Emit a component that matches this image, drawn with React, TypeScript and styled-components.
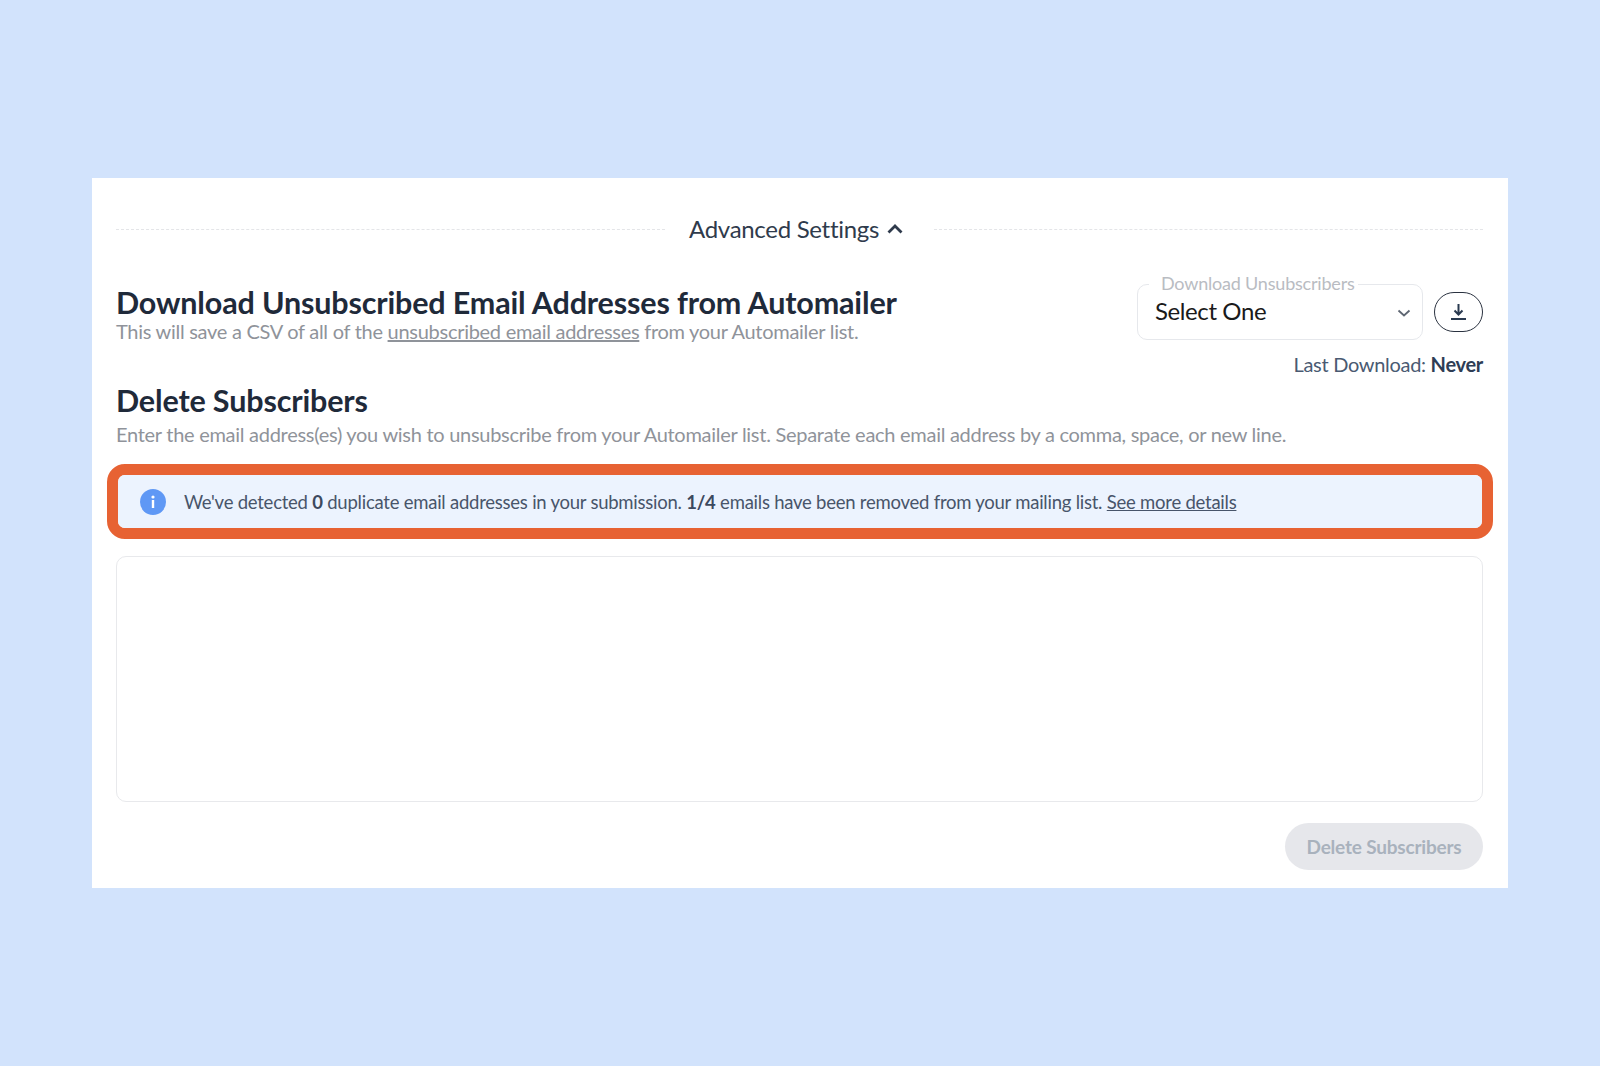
import React from "react";
import styled, { createGlobalStyle } from "styled-components";

const Global = createGlobalStyle`
  html, body { margin: 0; padding: 0; }
  body { background: #d2e3fc; font-family: Lato, "Open Sans", sans-serif; }
`;

const Page = styled.div`
  box-sizing: border-box;
  height: 1066px;
  padding: 178px 92px 0;
`;

const Card = styled.main`
  box-sizing: border-box;
  width: 1416px;
  height: 710px;
  background: #fff;
  padding: 39px 25px 18px 24px;
`;

const DividerRow = styled.div`
  display: flex;
  align-items: center;
  height: 24px;
  gap: 24px;
`;

const DashLine = styled.div`
  flex: 1;
  border-top: 1px dashed #e4e5e8;
`;

const Toggle = styled.div`
  display: flex;
  align-items: center;
  gap: 8px;
  padding: 0 7px 2px 0;
  font-size: 24px;
  letter-spacing: -0.3px;
  color: #2f3b4c;
`;

const ToggleChevron = styled.svg`
  margin-top: 2px;
`;

const DownloadRow = styled.section`
  display: flex;
  justify-content: space-between;
  margin-top: 43px;
`;

const Heading = styled.h2`
  margin: 1px 0 -1px;
  font-size: 30.5px;
  line-height: 35px;
  font-weight: 700;
  letter-spacing: -0.15px;
  color: #1f2a3a;
`;

const Muted = styled.p`
  margin: 0;
  font-size: 20px;
  line-height: 24px;
  letter-spacing: -0.28px;
  color: #8f939a;
  a { color: inherit; text-decoration: underline; }
`;

const Controls = styled.div`
  display: flex;
  flex-direction: column;
  align-items: flex-end;
`;

const ControlRow = styled.div`
  display: flex;
  align-items: center;
  gap: 11px;
`;

const SelectBox = styled.div`
  position: relative;
  box-sizing: border-box;
  width: 286px;
  height: 56px;
  border: 1.5px solid #e6e8ec;
  border-radius: 10px;
  padding: 0 11px 4px 17px;
  display: flex;
  align-items: center;
  justify-content: space-between;
  font-size: 24px;
  letter-spacing: -0.4px;
  color: #1a1a1a;
`;

const SelectChevron = styled.svg`
  margin-top: 6px;
`;

const FloatLabel = styled.span`
  position: absolute;
  left: 11px;
  top: -12px;
  padding: 0 3px 0 12px;
  background: #fff;
  font-size: 18px;
  line-height: 20px;
  letter-spacing: -0.2px;
  color: #b9bcc2;
`;

const RoundButton = styled.button`
  width: 49px;
  height: 40px;
  padding: 0;
  display: flex;
  align-items: center;
  justify-content: center;
  background: #fff;
  border: 1.5px solid #2a3240;
  border-radius: 20px;
  color: #2a3a50;
`;

const LastDownload = styled.div`
  margin-top: 13px;
  font-size: 20px;
  line-height: 22px;
  letter-spacing: -0.3px;
  color: #4a5a72;
  strong { color: #2e3d55; font-weight: 700; }
`;

const DeleteHeading = styled(Heading)`
  margin-top: 8px;
`;

const DeleteText = styled(Muted)`
  margin-top: 5px;
`;

const Highlight = styled.div`
  margin: 18px -10px 0 -9px;
  border: 11px solid #e76233;
  border-radius: 18px;
  overflow: hidden;
`;

const Alert = styled.div`
  display: flex;
  align-items: center;
  height: 53px;
  padding-left: 22px;
  gap: 18px;
  background: #ecf3fe;
  font-size: 18.5px;
  letter-spacing: -0.24px;
  color: #48556a;
  strong { font-weight: 700; color: #3c495e; }
  a { color: inherit; text-decoration: underline; }
`;

const Area = styled.div`
  box-sizing: border-box;
  margin-top: 17px;
  height: 246px;
  border: 1.5px solid #e8e9ec;
  border-radius: 10px;
`;

const Footer = styled.div`
  display: flex;
  justify-content: flex-end;
  margin-top: 21px;
`;

const DeleteButton = styled.button`
  width: 198px;
  height: 47px;
  border: 0;
  border-radius: 24px;
  background: #e6e7eb;
  color: #a9b2bd;
  font-family: inherit;
  font-size: 19px;
  font-weight: 700;
  letter-spacing: -0.2px;
`;

export default function App() {
  return (
    <>
      <Global />
      <Page>
        <Card>
          <DividerRow>
            <DashLine />
            <Toggle>
              Advanced Settings
              <ToggleChevron width="16" height="10" viewBox="0 0 16 10" fill="none">
                <path d="M1.5 8.5 8 2l6.5 6.5" stroke="#2f3b4c" strokeWidth="2.8" />
              </ToggleChevron>
            </Toggle>
            <DashLine />
          </DividerRow>
          <DownloadRow>
            <div>
              <Heading>Download Unsubscribed Email Addresses from Automailer</Heading>
              <Muted>
                This will save a CSV of all of the <a>unsubscribed email addresses</a> from your Automailer list.
              </Muted>
            </div>
            <Controls>
              <ControlRow>
                <SelectBox>
                  <FloatLabel>Download Unsubscribers</FloatLabel>
                  Select One
                  <SelectChevron width="14" height="8" viewBox="0 0 14 8" fill="none">
                    <path d="M1.5 1.5 7 6.5l5.500-5" stroke="#5e6672" strokeWidth="1.8" />
                  </SelectChevron>
                </SelectBox>
                <RoundButton aria-label="Download">
                  <svg width="20" height="20" viewBox="0 0 20 20" fill="none">
                    <path d="M9.500 2v10M5.500 8.500l4 4 4-4M2 17h15" stroke="#2a3a50" strokeWidth="2" />
                  </svg>
                </RoundButton>
              </ControlRow>
              <LastDownload>
                Last Download: <strong>Never</strong>
              </LastDownload>
            </Controls>
          </DownloadRow>
          <DeleteHeading>Delete Subscribers</DeleteHeading>
          <DeleteText>
            Enter the email address(es) you wish to unsubscribe from your Automailer list. Separate each email address by a comma, space, or new line.
          </DeleteText>
          <Highlight>
            <Alert>
              <svg width="26" height="26" viewBox="0 0 26 26">
                <circle cx="13" cy="13" r="13" fill="#5f98f5" />
                <circle cx="13" cy="8" r="1.600" fill="#fff" />
                <rect x="11.800" y="11" width="2.400" height="8" fill="#fff" />
              </svg>
              <span>
                We've detected <strong>0</strong> duplicate email addresses in your submission. <strong>1/4</strong> emails have been removed from your mailing list. <a>See more details</a>
              </span>
            </Alert>
          </Highlight>
          <Area />
          <Footer>
            <DeleteButton>Delete Subscribers</DeleteButton>
          </Footer>
        </Card>
      </Page>
    </>
  );
}
